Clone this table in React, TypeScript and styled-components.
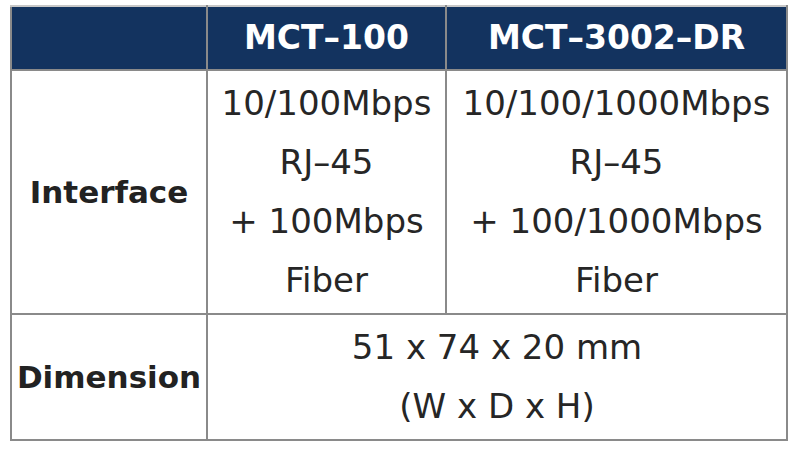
import React from 'react'
import styled, { createGlobalStyle } from 'styled-components'

const GlobalStyle = createGlobalStyle`
  html, body {
    margin: 0;
    padding: 0;
    background: #fff;
  }
  body {
    font-family: 'DejaVu Sans', 'Liberation Sans', sans-serif;
    color: #222;
  }
`

const Page = styled.div`
  width: 800px;
  height: 450px;
  padding: 5px 0 0 10px;
  box-sizing: border-box;
`

const Table = styled.table`
  width: 778px;
  border-collapse: collapse;
  table-layout: fixed;
  border: 2px solid #8a8a8a;
`

const HeadCell = styled.th`
  background: #13335f;
  color: #fff;
  font-size: 33px;
  font-weight: 700;
  line-height: 54px;
  padding: 4px 0;
  text-align: center;
  border: 2px solid #8a8a8a;
  border-top-color: #c8c8c8;
`

const LabelCell = styled.td`
  font-size: 31px;
  font-weight: 700;
  text-align: center;
  vertical-align: middle;
  padding: 3px 0;
  border: 2px solid #8a8a8a;
  color: #222;
`

const ValueCell = styled.td`
  font-size: 34px;
  line-height: 59px;
  text-align: center;
  vertical-align: middle;
  padding: 3px 0;
  border: 2px solid #8a8a8a;
  color: #262626;
  white-space: nowrap;
`

const Line = styled.div``

type Spec = {
  label: string
  values: string[][]
}

const models = ['MCT–100', 'MCT–3002–DR']

const specs: Spec[] = [
  {
    label: 'Interface',
    values: [
      ['10/100Mbps', 'RJ–45', '+ 100Mbps', 'Fiber'],
      ['10/100/1000Mbps', 'RJ–45', '+ 100/1000Mbps', 'Fiber'],
    ],
  },
  {
    label: 'Dimension',
    values: [['51 x 74 x 20 mm', '(W x D x H)']],
  },
]

const App: React.FC = () => {
  return (
    <Page>
      <GlobalStyle />
      <Table>
        <colgroup>
          <col style={{ width: 196 }} />
          <col style={{ width: 239 }} />
          <col />
        </colgroup>
        <thead>
          <tr>
            <HeadCell />
            {models.map((m) => (
              <HeadCell key={m}>{m}</HeadCell>
            ))}
          </tr>
        </thead>
        <tbody>
          {specs.map((s) => (
            <tr key={s.label}>
              <LabelCell>{s.label}</LabelCell>
              {s.values.map((lines, i) => (
                <ValueCell key={i} colSpan={s.values.length === 1 ? 2 : 1}>
                  {lines.map((l) => (
                    <Line key={l}>{l}</Line>
                  ))}
                </ValueCell>
              ))}
            </tr>
          ))}
        </tbody>
      </Table>
    </Page>
  )
}

export default App
